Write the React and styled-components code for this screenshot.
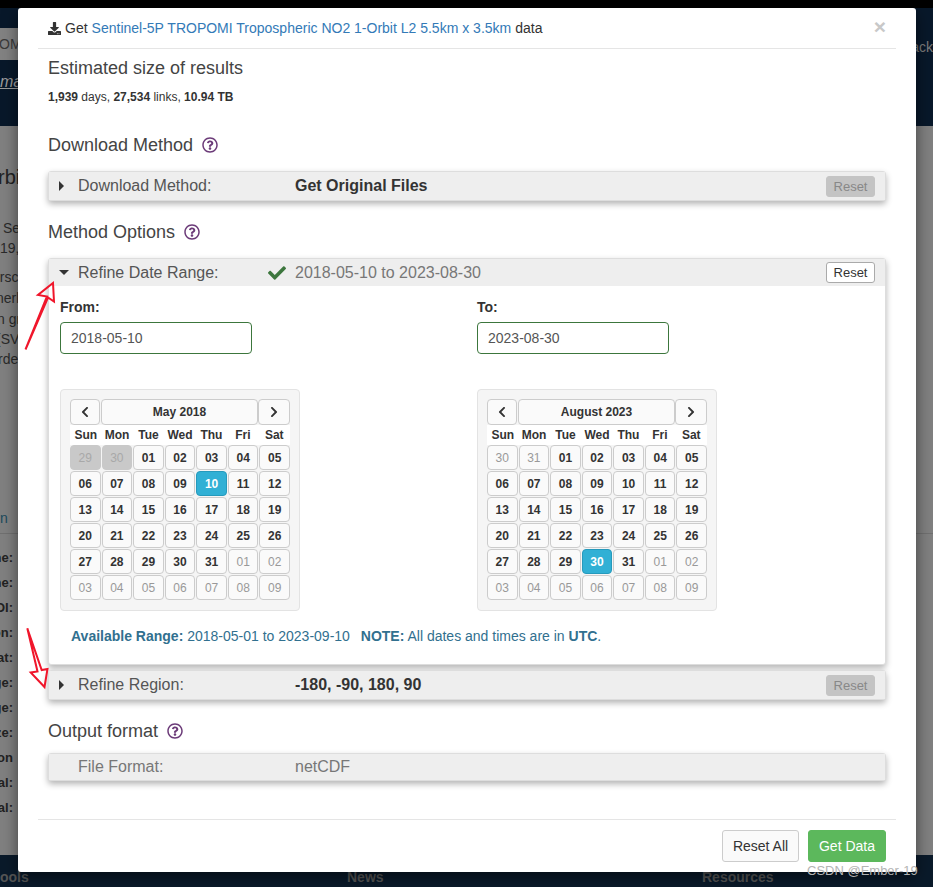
import React from 'react'
import styled, { createGlobalStyle } from 'styled-components'
import { FaCheck, FaChevronLeft, FaChevronRight, FaDownload, FaRegQuestionCircle } from 'react-icons/fa'

const GlobalStyle = createGlobalStyle`
  html, body {
    margin: 0;
    padding: 0;
    background: #000;
  }
  * {
    box-sizing: border-box;
  }
  body {
    font-family: "Liberation Sans", Arial, sans-serif;
    font-size: 14px;
    color: #333;
  }
`

const Screen = styled.div`
  position: relative;
  width: 933px;
  height: 887px;
  overflow: hidden;
  display: flex;
  flex-direction: column;
  background: #000;
  padding-top: 8px;
`

const TopBand = styled.div`
  height: 118px;
  background: #08182a;
  padding-top: 20px;
  display: flex;
  flex-direction: column;
`

const SearchRow = styled.div`
  height: 32px;
  display: flex;
  justify-content: space-between;
  align-items: center;
`

const SearchBox = styled.div`
  width: 40px;
  height: 32px;
  background: #828282;
  color: #3a3a3a;
  font-size: 14px;
  line-height: 32px;
  text-indent: -1px;
  overflow: hidden;
`

const BackLabel = styled.span`
  color: #7c7c7c;
  font-size: 14px;
  margin-top: 6px;
`

const SummaryLink = styled.a`
  margin-top: 13px;
  color: #9a9a9a;
  font-style: italic;
  font-size: 16px;
  line-height: 18px;
  text-decoration: underline;
`

const PageBody = styled.div`
  flex: 1;
  background: #808080;
  padding-top: 38px;
  overflow: hidden;
`

const PageTitle = styled.div`
  color: #222;
  font-size: 20px;
  line-height: 26px;
  text-indent: -2px;
`

const PageText = styled.div`
  margin-top: ${(p) => p.$top || 0}px;
  padding-left: ${(p) => p.$left || 0}px;
  text-indent: ${(p) => p.$indent || 0}px;
  color: #2a2a2a;
  font-size: 14px;
  line-height: 20px;
  white-space: nowrap;
`

const TabLink = styled.div`
  margin-top: 139px;
  height: 15px;
  line-height: 20px;
  color: #1c4a5c;
  font-size: 14px;
  padding-bottom: 10px;
  box-sizing: content-box;
  border-bottom: 1px solid #707070;
`

const KeyList = styled.div`
  margin-top: 11px;
  width: 13px;
  display: flex;
  flex-direction: column;
  align-items: flex-end;
`

const KeyName = styled.div`
  height: 25px;
  line-height: 25px;
  font-size: 13px;
  font-weight: bold;
  color: #222;
  white-space: nowrap;
`

const PageFooter = styled.div`
  height: 32px;
  background: #0a1a2a;
  padding-top: 14px;
  display: grid;
  grid-template-columns: 347px 355px 1fr;
`

const FooterItem = styled.div`
  color: #555;
  font-weight: bold;
  font-size: 14px;
  line-height: 16px;
`

const Modal = styled.div`
  position: absolute;
  left: 18px;
  top: 8px;
  width: 898px;
  height: 864px;
  background: #fff;
  border-radius: 3px;
  box-shadow: 0 5px 15px rgba(0, 0, 0, 0.5);
  display: flex;
  flex-direction: column;
`

const ModalHeader = styled.div`
  margin: 0 20px;
  padding: 0 10px;
  height: 41px;
  border-bottom: 1px solid #e5e5e5;
  display: flex;
  align-items: center;
  justify-content: space-between;
`

const ModalTitle = styled.div`
  display: flex;
  align-items: center;
  font-size: 14px;
  color: #333;

  svg {
    margin-right: 4px;
  }
  a {
    color: #337ab7;
    margin: 0 4px;
    text-decoration: none;
  }
`

const CloseButton = styled.span`
  color: #c8c8c8;
  font-size: 21px;
  font-weight: bold;
  line-height: 16px;
  margin-top: -3px;
`

const ModalBody = styled.div`
  flex: 1;
  padding: 0 30px;
`

const SectionTitle = styled.h4`
  margin: ${(p) => p.$top}px 0 ${(p) => p.$bottom}px;
  font-size: 18px;
  font-weight: normal;
  line-height: 20px;
  color: #444;
  display: flex;
  align-items: center;
  gap: 9px;

  svg {
    color: #6b3a78;
  }
`

const SizeLine = styled.div`
  font-size: 12px;
  line-height: 16px;
  color: #333;
`

const Panel = styled.div`
  margin-top: ${(p) => p.$top || 0}px;
  border: 1px solid #ddd;
  border-radius: 3px;
  background: #fff;
  box-shadow: 0 3px 6px rgba(0, 0, 0, 0.3);
`

const PanelHeader = styled.div`
  height: ${(p) => p.$height}px;
  background: #eee;
  display: grid;
  grid-template-columns: 29px 217px 1fr auto;
  align-items: center;
  padding-right: 10px;
  font-size: 16px;
  color: ${(p) => (p.$muted ? '#777' : '#555')};
`

const Caret = styled.span`
  justify-self: start;
  margin-left: 10px;
  width: 0;
  height: 0;
  border-style: solid;
  border-color: transparent;
  ${(p) =>
    p.$open
      ? `border-width: 5px 5px 0 5px; border-top-color: #333;`
      : `border-width: 5px 0 5px 5px; border-left-color: #333;`}
`

const PanelLabel = styled.span`
  display: flex;
  align-items: center;
  justify-content: space-between;
  padding-right: 9px;

  svg {
    color: #3c763d;
  }
`

const PanelValue = styled.span`
  font-weight: ${(p) => (p.$strong ? 'bold' : 'normal')};
  color: ${(p) => (p.$strong ? '#333' : '#777')};
`

const ResetButton = styled.button`
  width: 49px;
  height: 21px;
  padding: 0;
  font-family: inherit;
  font-size: 13px;
  border-radius: 3px;
  border: 1px solid ${(p) => (p.disabled ? '#c4c4c4' : '#aaa')};
  background: ${(p) => (p.disabled ? '#c4c4c4' : '#fff')};
  color: ${(p) => (p.disabled ? '#888' : '#333')};
`

const DateColumns = styled.div`
  display: grid;
  grid-template-columns: 417px 417px;
  padding: 11px 0 0 11px;
  height: 340px;
`

const DateColumn = styled.div`
  display: flex;
  flex-direction: column;
  align-items: flex-start;
`

const FieldLabel = styled.label`
  font-weight: bold;
  font-size: 14px;
  line-height: 20px;
  margin-bottom: 5px;
`

const DateInput = styled.div`
  width: 192px;
  height: 32px;
  border: 1px solid #3c763d;
  border-radius: 4px;
  padding: 0 10px;
  font-size: 14px;
  line-height: 30px;
  color: #555;
`

const CalendarWell = styled.div`
  margin-top: 35px;
  width: 240px;
  height: 222px;
  padding: 9px;
  background: #f5f5f5;
  border: 1px solid #e3e3e3;
  border-radius: 4px;
`

const NavRow = styled.div`
  display: grid;
  grid-template-columns: 31px 1fr 32px;
  height: 26px;
`

const NavButton = styled.div`
  display: flex;
  align-items: center;
  justify-content: center;
  background: #fafafa;
  border: 1px solid #ccc;
  border-radius: 4px;
  color: #333;
  font-size: 12px;
  font-weight: bold;

  &:first-child {
    margin-right: 1px;
  }
`

const DayNames = styled.div`
  display: grid;
  grid-template-columns: repeat(7, 1fr);
  background: #fff;
  height: 20px;
  align-items: center;
  text-align: center;
  font-size: 12px;
  font-weight: bold;
  color: #333;
`

const DayGrid = styled.div`
  display: grid;
  grid-template-columns: repeat(7, 1fr);
  grid-auto-rows: 25px;
  gap: 1px;
`

const dayColors = {
  normal: 'background: #fafafa; border-color: #ccc; color: #333; font-weight: bold;',
  muted: 'background: #fafafa; border-color: #ccc; color: #999; font-weight: normal;',
  disabled: 'background: #c9c9c9; border-color: #c9c9c9; color: #a8a8a8; font-weight: normal;',
  active: 'background: #31b0d5; border-color: #269abc; color: #fff; font-weight: bold;',
}

const DayCell = styled.div`
  border: 1px solid;
  border-radius: 4px;
  display: flex;
  align-items: center;
  justify-content: center;
  font-size: 12px;
  ${(p) => dayColors[p.$kind]}
`

const RangeNote = styled.div`
  padding-left: 22px;
  height: 38px;
  font-size: 14px;
  line-height: 20px;
  color: #31708f;

  b {
    font-weight: bold;
  }
  span {
    margin-left: 7px;
  }
`

const ModalFooter = styled.div`
  margin: 0 20px;
  padding: 10px 10px 10px 0;
  border-top: 1px solid #e5e5e5;
  display: flex;
  justify-content: flex-end;
  gap: 9px;
`

const FooterButton = styled.button`
  height: 32px;
  width: ${(p) => p.$width}px;
  padding: 0;
  font-family: inherit;
  font-size: 14px;
  border-radius: 3px;
  border: 1px solid ${(p) => (p.$primary ? '#5cb85c' : '#ccc')};
  background: ${(p) => (p.$primary ? '#5cb85c' : '#fafafa')};
  color: ${(p) => (p.$primary ? '#fff' : '#333')};
`

const Watermark = styled.div`
  position: absolute;
  left: 807px;
  top: 863px;
  color: #b4b4b4;
  font-size: 13px;
  line-height: 16px;
  white-space: nowrap;
`

const ArrowLayer = styled.svg`
  position: absolute;
  left: 0;
  top: 0;
  pointer-events: none;
`

const days = (from, count) =>
  Array.from({ length: count }, (_, i) => String(from + i).padStart(2, '0'))

const calendars = {
  may: {
    title: 'May 2018',
    lead: days(29, 2),
    leadKind: 'disabled',
    month: days(1, 31),
    active: '10',
    trail: days(1, 9),
  },
  aug: {
    title: 'August 2023',
    lead: days(30, 2),
    leadKind: 'muted',
    month: days(1, 31),
    active: '30',
    trail: days(1, 9),
  },
}

function Calendar({ data }) {
  return (
    <CalendarWell>
      <NavRow>
        <NavButton><FaChevronLeft size={12} /></NavButton>
        <NavButton>{data.title}</NavButton>
        <NavButton><FaChevronRight size={12} /></NavButton>
      </NavRow>
      <DayNames>
        {['Sun', 'Mon', 'Tue', 'Wed', 'Thu', 'Fri', 'Sat'].map((d) => (
          <span key={d}>{d}</span>
        ))}
      </DayNames>
      <DayGrid>
        {data.lead.map((d) => (
          <DayCell key={'l' + d} $kind={data.leadKind}>{d}</DayCell>
        ))}
        {data.month.map((d) => (
          <DayCell key={d} $kind={d === data.active ? 'active' : 'normal'}>{d}</DayCell>
        ))}
        {data.trail.map((d) => (
          <DayCell key={'t' + d} $kind="muted">{d}</DayCell>
        ))}
      </DayGrid>
    </CalendarWell>
  )
}

function Backdrop() {
  return (
    <>
      <TopBand>
        <SearchRow>
          <SearchBox>OM</SearchBox>
          <BackLabel>ack</BackLabel>
        </SearchRow>
        <SummaryLink>ma</SummaryLink>
      </TopBand>
      <PageBody>
        <PageTitle>rbi</PageTitle>
        <PageText $top={28} $left={3}>Se</PageText>
        <PageText>19,</PageText>
        <PageText $top={9} $indent={-8}>ursc</PageText>
        <PageText $top={1} $indent={-4}>nerl</PageText>
        <PageText $top={1} $indent={-3}>n gr</PageText>
        <PageText $indent={-4}>(SV</PageText>
        <PageText $indent={-2}>rde</PageText>
        <TabLink>n</TabLink>
        <KeyList>
          {['ne:', 'ne:', 'OI:', 'on:', 'at:', 'ge:', 'ge:', 'ze:', 'on', 'al:', 'al:'].map((k, i) => (
            <KeyName key={i}>{k}</KeyName>
          ))}
        </KeyList>
      </PageBody>
      <PageFooter>
        <FooterItem>ools</FooterItem>
        <FooterItem>News</FooterItem>
        <FooterItem>Resources</FooterItem>
      </PageFooter>
    </>
  )
}

export default function App() {
  return (
    <Screen>
      <GlobalStyle />
      <Backdrop />
      <Modal>
        <ModalHeader>
          <ModalTitle>
            <FaDownload size={13} />
            Get <a>Sentinel-5P TROPOMI Tropospheric NO2 1-Orbit L2 5.5km x 3.5km</a> data
          </ModalTitle>
          <CloseButton>×</CloseButton>
        </ModalHeader>
        <ModalBody>
          <SectionTitle $top={9} $bottom={11}>Estimated size of results</SectionTitle>
          <SizeLine><b>1,939</b> days, <b>27,534</b> links, <b>10.94 TB</b></SizeLine>

          <SectionTitle $top={30} $bottom={16}>
            Download Method <FaRegQuestionCircle size={16} />
          </SectionTitle>
          <Panel>
            <PanelHeader $height={28}>
              <Caret />
              <PanelLabel>Download Method:</PanelLabel>
              <PanelValue $strong>Get Original Files</PanelValue>
              <ResetButton disabled>Reset</ResetButton>
            </PanelHeader>
          </Panel>

          <SectionTitle $top={21} $bottom={16}>
            Method Options <FaRegQuestionCircle size={16} />
          </SectionTitle>
          <Panel>
            <PanelHeader $height={27}>
              <Caret $open />
              <PanelLabel>Refine Date Range: <FaCheck size={18} /></PanelLabel>
              <PanelValue>2018-05-10 to 2023-08-30</PanelValue>
              <ResetButton>Reset</ResetButton>
            </PanelHeader>
            <DateColumns>
              <DateColumn>
                <FieldLabel>From:</FieldLabel>
                <DateInput>2018-05-10</DateInput>
                <Calendar data={calendars.may} />
              </DateColumn>
              <DateColumn>
                <FieldLabel>To:</FieldLabel>
                <DateInput>2023-08-30</DateInput>
                <Calendar data={calendars.aug} />
              </DateColumn>
            </DateColumns>
            <RangeNote>
              <b>Available Range:</b> 2018-05-01 to 2023-09-10 <span><b>NOTE:</b> All dates and times are in <b>UTC</b>.</span>
            </RangeNote>
          </Panel>
          <Panel $top={5}>
            <PanelHeader $height={28}>
              <Caret />
              <PanelLabel>Refine Region:</PanelLabel>
              <PanelValue $strong>-180, -90, 180, 90</PanelValue>
              <ResetButton disabled>Reset</ResetButton>
            </PanelHeader>
          </Panel>

          <SectionTitle $top={21} $bottom={12}>
            Output format <FaRegQuestionCircle size={16} />
          </SectionTitle>
          <Panel>
            <PanelHeader $height={26} $muted>
              <span />
              <PanelLabel>File Format:</PanelLabel>
              <PanelValue>netCDF</PanelValue>
            </PanelHeader>
          </Panel>
        </ModalBody>
        <ModalFooter>
          <FooterButton $width={77}>Reset All</FooterButton>
          <FooterButton $width={78} $primary>Get Data</FooterButton>
        </ModalFooter>
      </Modal>
      <Watermark>CSDN @Ember-19</Watermark>
      <ArrowLayer width="933" height="887" viewBox="0 0 933 887" fill="none" stroke="#f0162b" strokeWidth="2">
        <polygon points="25.5,349.5 47,296.5 38,295 53,283 54,301.5 48,297.5" />
        <polygon points="27.3,628.3 41.7,670 47.5,669 44.5,687 30.7,672.5 37.5,671.5" />
      </ArrowLayer>
    </Screen>
  )
}
